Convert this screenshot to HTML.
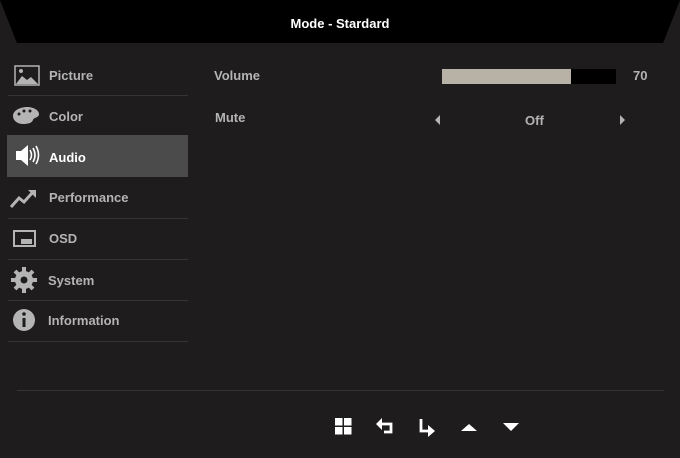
<!DOCTYPE html><html><head><style>
body{margin:0;width:680px;height:458px;background:#1e1c1d;font-family:"Liberation Sans",sans-serif;overflow:hidden;position:relative}
.a{position:absolute}
.top{left:0;top:0;width:680px;height:43px;background:#000;clip-path:polygon(0 0,680px 0,663px 43px,17px 43px)}
.t{color:#fff;font-weight:bold;font-size:13px}
.m{color:#b4b4b4;font-weight:bold;font-size:13px}
.sep{left:8px;width:180px;height:1px;background:#353335}
</style></head><body>
<div class="a top"></div>
<div class="a t" style="left:0;width:680px;text-align:center;top:16px">Mode - Stardard</div>
<div class="a" style="left:7px;top:135px;width:181px;height:42px;background:#4b4b4b"></div>
<div class="a sep" style="top:95px"></div>
<div class="a sep" style="top:218px"></div>
<div class="a sep" style="top:259px"></div>
<div class="a sep" style="top:300px"></div>
<div class="a sep" style="top:341px"></div>
<svg class="a" style="left:0;top:55px" width="48" height="290" fill="#b4b4b4">
<rect x="15" y="11" width="24" height="19" fill="none" stroke="#b4b4b4" stroke-width="1.5"/>
<path d="M16 29 L22 21 L27 25 L31 22 L38 29Z"/><circle cx="21" cy="16" r="2"/>
<path d="M13 61c0-6 8-9 14-9s12 3 12 7c0 4-5 3-6 6s-5 4-10 4S13 66 13 61z"/>
<circle cx="19" cy="59" r="1.5" fill="#1e1c1d"/><circle cx="24" cy="56" r="1.5" fill="#1e1c1d"/><circle cx="30" cy="56" r="1.5" fill="#1e1c1d"/>
<path fill="#fff" d="M16 96h5l7-6v21l-7-6h-5z"/>
<path d="M30 95q3 5 0 10M33 93q4 7 0 14M36 91q5 9 0 18" stroke="#fff" stroke-width="1.6" fill="none"/>
<path d="M11 152 L19 143 L24 147 L33 137" stroke="#b4b4b4" stroke-width="3" fill="none"/><path d="M28 135h8v8z"/>
<rect x="14" y="176" width="21" height="15" fill="none" stroke="#b4b4b4" stroke-width="2"/><rect x="21" y="184" width="11" height="5"/>
<circle cx="24" cy="225" r="9"/><g stroke="#b4b4b4" stroke-width="4"><path d="M24 212v26M11 225h26M15 216l18 18M33 216l-18 18"/></g><circle cx="24" cy="225" r="3.5" fill="#1e1c1d"/>
<circle cx="24" cy="265" r="11"/><rect x="22.5" y="263" width="3" height="9" fill="#1e1c1d"/><circle cx="24" cy="259" r="1.8" fill="#1e1c1d"/>
</svg>
<div class="a m" style="left:49px;top:68px">Picture</div>
<div class="a m" style="left:49px;top:109px">Color</div>
<div class="a t" style="left:49px;top:150px">Audio</div>
<div class="a m" style="left:49px;top:190px">Performance</div>
<div class="a m" style="left:49px;top:231px">OSD</div>
<div class="a m" style="left:48px;top:273px">System</div>
<div class="a m" style="left:48px;top:313px">Information</div>
<div class="a m" style="left:214px;top:68px">Volume</div>
<div class="a m" style="left:215px;top:110px">Mute</div>
<div class="a" style="left:442px;top:69px;width:174px;height:15px;background:#000"></div>
<div class="a" style="left:442px;top:69px;width:129px;height:15px;background:#b7b2a5"></div>
<div class="a m" style="left:633px;top:68px">70</div>
<div class="a m" style="left:525px;top:113px">Off</div>
<svg class="a" style="left:430px;top:113px" width="200" height="16" fill="#b4b4b4"><path d="M10 2v10l-5-5z"/><path d="M190 2v10l5-5z"/></svg>
<div class="a" style="left:17px;top:390px;width:647px;height:1px;background:#353335"></div>
<svg class="a" style="left:330px;top:410px" width="200" height="30" fill="#fff">
<rect x="5" y="8" width="7.5" height="7.5"/><rect x="14" y="8" width="7.5" height="7.5"/><rect x="5" y="17" width="7.5" height="7.5"/><rect x="14" y="17" width="7.5" height="7.5"/>
<path d="M51 14h10v8h-7" stroke="#fff" stroke-width="2.8" fill="none"/><path d="M46 14l6-6v12z"/>
<path d="M91 9v12h9" stroke="#fff" stroke-width="2.8" fill="none"/><path d="M98 15l7 6-7 6z"/>
<path d="M131 21l8-7 8 7z"/><path d="M173 13h16l-8 8z"/>
</svg>
</body></html>
